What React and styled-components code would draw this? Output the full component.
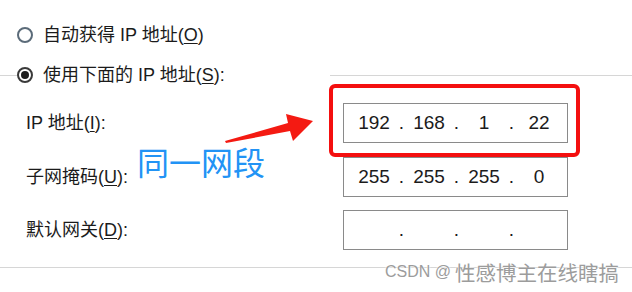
import React from "react";
import styled, { createGlobalStyle } from "styled-components";

const GlobalStyle = createGlobalStyle`
  html, body {
    margin: 0;
    padding: 0;
    background: #ffffff;
  }
  body {
    font-family: "Liberation Sans", "Noto Sans CJK SC", sans-serif;
  }
`;

const Page = styled.div`
  position: relative;
  width: 632px;
  height: 292px;
  overflow: hidden;
  background: #ffffff;
  color: #1b1b1b;
  font-size: 18px;
  display: flex;
  flex-direction: column;
`;

const RadioRow = styled.div`
  display: flex;
  align-items: center;
  height: 24px;
  margin-top: ${(p) => p.$top}px;
`;

const Rule = styled.div`
  flex: none;
  height: 1px;
  background: #d6d6d6;
  width: ${(p) => p.$width}px;
  margin-left: ${(p) => (p.$push ? "auto" : "0")};
`;

const RadioMark = styled.svg`
  flex: none;
  display: block;
  margin-left: ${(p) => p.$indent}px;
  margin-right: 10px;
`;

const Radio = ({ checked, indent }) => (
  <RadioMark $indent={indent} width="16" height="16" viewBox="0 0 16 16">
    <circle
      cx="8"
      cy="8"
      r="7"
      fill="#fff"
      stroke={checked ? "#3a3a3a" : "#5b6b79"}
      strokeWidth="2"
    />
    {checked && <circle cx="8" cy="8" r="4" fill="#1b1b1b" />}
  </RadioMark>
);

const Label = styled.span`
  white-space: nowrap;
  line-height: 24px;
`;

const Key = styled.span`
  text-decoration: underline;
  text-underline-offset: 2px;
  text-decoration-thickness: 1px;
`;

const Fields = styled.div`
  display: grid;
  grid-template-columns: 317px 225px;
  grid-auto-rows: 40px;
  row-gap: 13.5px;
  margin-top: 16px;
  padding-left: 26px;
  align-items: center;
`;

const IpBox = styled.div`
  box-sizing: border-box;
  height: 40px;
  border: 1px solid #8a8a8a;
  display: flex;
  align-items: center;
  padding-left: 8px;
  font-family: "Liberation Sans", sans-serif;
  font-size: 19px;
  color: #1b1b1b;
`;

const Octet = styled.span`
  width: 44px;
  text-align: center;
`;

const Dot = styled.span`
  width: 11px;
  text-align: center;
`;

const BottomRule = styled.div`
  flex: none;
  height: 1px;
  margin-top: 17px;
  background: #d6d6d6;
`;

const Highlight = styled.div`
  position: absolute;
  left: 329px;
  top: 84px;
  width: 251px;
  height: 73px;
  box-sizing: border-box;
  border: 4px solid #f40f0f;
  border-radius: 6px;
`;

const Note = styled.div`
  position: absolute;
  left: 137px;
  top: 140px;
  font-family: "Noto Sans CJK SC", sans-serif;
  font-size: 32px;
  line-height: 42px;
  color: #2293f5;
  white-space: nowrap;
`;

const Arrow = styled.svg`
  position: absolute;
  left: 220px;
  top: 110px;
`;

const Watermark = styled.div`
  position: absolute;
  left: 385px;
  top: 258px;
  height: 28px;
  display: flex;
  align-items: center;
  color: #9c9c9c;
  white-space: nowrap;
  text-shadow: 0 0 2px #fff, 0 0 2px #fff;
`;

const MarkLatin = styled.span`
  font-family: "Liberation Sans", sans-serif;
  font-size: 16px;
  margin-right: 4px;
`;

const MarkCjk = styled.span`
  font-family: "Noto Sans CJK SC", sans-serif;
  font-size: 20.5px;
`;

const IpAddress = ({ parts }) => (
  <IpBox>
    {parts.map((part, i) => (
      <React.Fragment key={i}>
        {i > 0 && <Dot>.</Dot>}
        <Octet>{part}</Octet>
      </React.Fragment>
    ))}
  </IpBox>
);

const rows = [
  { text: "IP 地址(", key: "I", parts: ["192", "168", "1", "22"] },
  { text: "子网掩码(", key: "U", parts: ["255", "255", "255", "0"] },
  { text: "默认网关(", key: "D", parts: ["", "", "", ""] },
];

export default function App() {
  return (
    <Page>
      <GlobalStyle />
      <RadioRow $top={23}>
        <Radio indent={17} />
        <Label>
          自动获得 IP 地址(<Key>O</Key>)
        </Label>
      </RadioRow>

      <RadioRow $top={16}>
        <Rule $width={17} />
        <Radio checked indent={0} />
        <Label>
          使用下面的 IP 地址(<Key>S</Key>):
        </Label>
        <Rule $width={302} $push />
      </RadioRow>

      <Fields>
        {rows.map((row) => (
          <React.Fragment key={row.key}>
            <Label>
              {row.text}
              <Key>{row.key}</Key>):
            </Label>
            <IpAddress parts={row.parts} />
          </React.Fragment>
        ))}
      </Fields>

      <BottomRule />

      <Highlight />
      <Arrow width="100" height="40" viewBox="0 0 100 40">
        <polygon
          points="5,31 68,13 66,4 93,11 73,31 70,21 6,33"
          fill="#f41a12"
        />
      </Arrow>
      <Note>同一网段</Note>
      <Watermark>
        <MarkLatin>CSDN @</MarkLatin>
        <MarkCjk>性感博主在线瞎搞</MarkCjk>
      </Watermark>
    </Page>
  );
}
